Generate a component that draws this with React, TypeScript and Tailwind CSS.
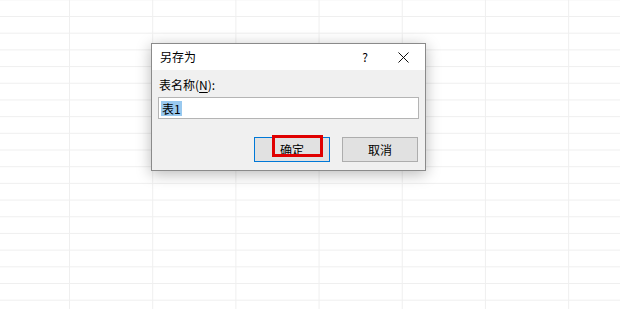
import { X } from 'lucide-react';

const font = { fontFamily: '"Noto Sans CJK SC", "Microsoft YaHei", sans-serif' };

const App = () => {
  return (
    <div
      className="relative w-[620px] h-[309px] overflow-hidden bg-white bg-[linear-gradient(to_right,#efefef_1px,transparent_1px),linear-gradient(to_bottom,#efefef_1px,transparent_1px)] bg-[size:83.2px_16.7px] bg-[position:69px_16px]"
      style={font}
    >
      {/* dialog window */}
      <div className="absolute left-[151px] top-[43px] w-[275px] h-[128px] border border-[#8a8a8a] bg-[#f0f0f0] shadow-[0_3px_14px_rgba(0,0,0,0.28)] flex flex-col text-[12px] text-black">
        <div className="h-[26px] bg-white flex items-center pl-[8px] pr-[8px]">
          <span className="flex-1 leading-none">另存为</span>
          <span className="w-[14px] text-center mr-[22px] leading-none">?</span>
          <X className="w-[19px] h-[19px] mr-[4px]" strokeWidth={1.2} />
        </div>

        <div className="flex-1 flex flex-col px-[6px] pt-[9px]">
          <div className="pl-[1px] leading-none h-[14px]">
            表名称(<span className="underline underline-offset-2">N</span>):
          </div>
          <div className="mt-[4px] h-[22px] w-[261px] bg-white border border-[#b4b4b4] flex items-center pl-[2px]">
            <span className="bg-[#99c9ef] leading-[15px] px-[1px]">表1</span>
          </div>

          <div className="mt-[18px] flex justify-end gap-[12px] pr-[1px]">
            <div className="relative w-[76px] h-[25px] border border-[#0078d7] bg-[#e1e1e1] flex items-center justify-center">
              <span>确定</span>
              <div className="absolute left-[17px] top-[-3px] w-[51px] h-[22px] border-[3px] border-[#e00000]" />
            </div>
            <div className="w-[76px] h-[25px] border border-[#adadad] bg-[#e1e1e1] flex items-center justify-center">
              取消
            </div>
          </div>
        </div>
      </div>
    </div>
  );
};

export default App;
